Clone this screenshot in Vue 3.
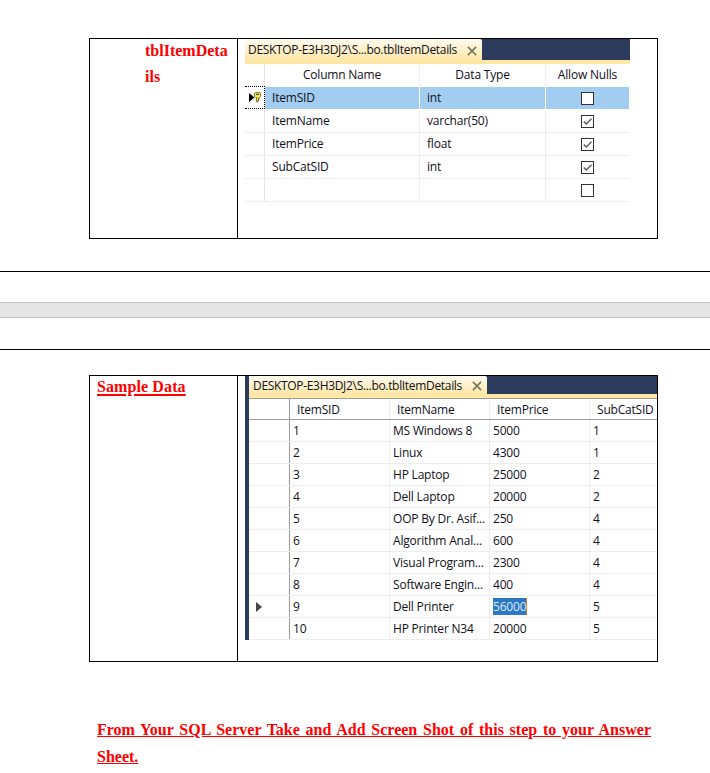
<template>
  <div class="page">
    <!-- design view of the table -->
    <div class="doc-row first">
      <div class="side">
        <h4 class="table-name">tblItemDetails</h4>
      </div>
      <div class="main">
        <div class="design-shot">
          <div class="tab-bar">
            <div class="tab">
              <span class="tab-title">DESKTOP-E3H3DJ2\S...bo.tblItemDetails</span>
              <svg class="tab-close" viewBox="0 0 11 11" aria-hidden="true">
                <path d="M1 1 10 10M10 1 1 10" />
              </svg>
            </div>
          </div>
          <div class="tab-strip"></div>
          <div class="design-row head">
            <div class="handle"></div>
            <div class="cell center">Column Name</div>
            <div class="cell center">Data Type</div>
            <div class="cell center">Allow Nulls</div>
          </div>
          <div
            v-for="(col, i) in columns"
            :key="i"
            class="design-row"
            :class="{ selected: i === 0 }"
          >
            <div class="handle" :class="{ current: i === 0 }">
              <svg v-if="i === 0" class="key" viewBox="0 0 12 11" aria-hidden="true">
                <path class="arrow" d="M0 1 5.500 5.500 0 10Z" />
                <path class="key-body" d="M5.500 1 6.500 .5h4l1 .5v3.500l-1 1H10v1H9v1h1v1H9v1.500H7.500V5.500h-1l-1-1Z" />
                <path class="key-hole" d="M7 1.800h3v1.200H7Z" />
              </svg>
            </div>
            <div class="cell">{{ col.name }}</div>
            <div class="cell">{{ col.type }}</div>
            <div class="cell center check-cell">
              <svg class="check" viewBox="0 0 13 13" aria-hidden="true">
                <rect x="0.500" y="0.500" width="12" height="12" />
                <path v-if="col.nulls" d="M2.800 6.500 5.300 9 10.500 3.800" />
              </svg>
            </div>
          </div>
        </div>
      </div>
    </div>

    <hr class="rule first-rule" />
    <div class="band"></div>
    <hr class="rule second-rule" />

    <!-- sample data -->
    <div class="doc-row second">
      <div class="side side-sample">
        <h4 class="sample-title">Sample Data</h4>
      </div>
      <div class="main">
        <div class="data-shot">
          <div class="tab-bar short">
            <div class="tab">
              <span class="tab-title">DESKTOP-E3H3DJ2\S...bo.tblItemDetails</span>
              <svg class="tab-close" viewBox="0 0 11 11" aria-hidden="true">
                <path d="M1 1 10 10M10 1 1 10" />
              </svg>
            </div>
          </div>
          <div class="tab-strip data-strip"></div>
          <div class="data-row data-head">
            <div class="row-head"></div>
            <div class="data-cell">ItemSID</div>
            <div class="data-cell">ItemName</div>
            <div class="data-cell">ItemPrice</div>
            <div class="data-cell">SubCatSID</div>
          </div>
          <div v-for="item in items" :key="item.id" class="data-row">
            <div class="row-head">
              <svg v-if="item.id === 9" class="pointer" viewBox="0 0 6 10" aria-hidden="true">
                <path d="M0 0 6 5 0 10Z" />
              </svg>
            </div>
            <div class="data-cell">{{ item.id }}</div>
            <div class="data-cell">{{ item.name }}</div>
            <div class="data-cell">
              <span :class="{ editing: item.id === 9 }">{{ item.price }}</span>
            </div>
            <div class="data-cell">{{ item.sub }}</div>
          </div>
        </div>
      </div>
    </div>

    <p class="note">From Your SQL Server Take and Add Screen Shot of this step to your Answer Sheet.</p>
  </div>
</template>

<script setup>
const columns = [
  { name: "ItemSID", type: "int", nulls: false },
  { name: "ItemName", type: "varchar(50)", nulls: true },
  { name: "ItemPrice", type: "float", nulls: true },
  { name: "SubCatSID", type: "int", nulls: true },
  { name: "", type: "", nulls: false },
];

const items = [
  { id: 1, name: "MS Windows 8", price: 5000, sub: 1 },
  { id: 2, name: "Linux", price: 4300, sub: 1 },
  { id: 3, name: "HP Laptop", price: 25000, sub: 2 },
  { id: 4, name: "Dell Laptop", price: 20000, sub: 2 },
  { id: 5, name: "OOP By Dr. Asif...", price: 250, sub: 4 },
  { id: 6, name: "Algorithm Anal...", price: 600, sub: 4 },
  { id: 7, name: "Visual Program...", price: 2300, sub: 4 },
  { id: 8, name: "Software Engin...", price: 400, sub: 4 },
  { id: 9, name: "Dell Printer", price: 56000, sub: 5 },
  { id: 10, name: "HP Printer N34", price: 20000, sub: 5 },
];
</script>

<style>
body {
  background: #fff;
}
</style>

<style scoped>
.page {
  width: 710px;
  height: 773px;
  overflow: hidden;
  padding-top: 38px;
  box-sizing: border-box;
  font-family: "Liberation Serif", serif;
  background: #fff;
}

.doc-row {
  display: grid;
  grid-template-columns: 148px 1fr;
  width: 569px;
  margin-left: 89px;
  box-sizing: border-box;
  border: 1px solid #000;
}
.doc-row.first {
  height: 201px;
}
.doc-row.second {
  height: 287px;
  margin-top: 25px;
}

.side {
  border-right: 1px solid #000;
  padding: 0 8px 0 55px;
  width: 148px;
  box-sizing: border-box;
}
.side-sample {
  padding: 1px 0 0 7px;
}
.table-name {
  margin: -1px 0 0;
  font-size: 16px;
  line-height: 26px;
  color: #f00;
  word-break: break-all;
}
.sample-title {
  margin: 0;
  font-size: 16px;
  line-height: 20px;
  color: #f00;
  text-decoration: underline;
  text-decoration-thickness: 2px;
  text-underline-offset: 2px;
  letter-spacing: 0.1px;
}

.design-shot {
  width: 385px;
  margin-left: 7px;
  font-family: "Open Sans", sans-serif;
  font-size: 12px;
  letter-spacing: -0.2px;
  color: #101020;
}
.tab-bar {
  height: 21px;
  background-color: #2c3b5b;
  background-image: radial-gradient(#3d4f73 0.5px, transparent 0.7px);
  background-size: 4px 4px;
}
.tab {
  display: flex;
  align-items: center;
  width: 237px;
  height: 100%;
  box-sizing: border-box;
  padding-left: 3px;
  background: linear-gradient(#fffbf0, #fde7a8);
  border-top-right-radius: 2px;
}
.tab-title {
  width: 216px;
  white-space: nowrap;
  letter-spacing: -0.32px;
}
.tab-close {
  width: 10px;
  height: 10px;
  margin: 2px 0 0 3px;
}
.tab-close path {
  fill: none;
  stroke: #77735c;
  stroke-width: 1.800;
}
.tab-strip {
  height: 4px;
  background: #ffe8a6;
}

.design-row {
  display: grid;
  grid-template-columns: 20px 155px 126px 83px;
  height: 23px;
  width: 384px;
  box-sizing: border-box;
  border-bottom: 1px solid #ededed;
}
.design-row.head {
  border-bottom: 0;
}
.handle {
  border-right: 1px solid #e4e4e4;
  position: relative;
}
.cell {
  display: flex;
  align-items: center;
  padding: 0 0 2px 7px;
  border-right: 1px solid #ededed;
  white-space: nowrap;
}
.cell:last-child {
  border-right: 0;
}
.cell.center {
  justify-content: center;
  padding-left: 0;
}
.cell.check-cell {
  padding-bottom: 0;
}
.design-row.selected {
  border-bottom-color: #fff;
}
.design-row.selected .cell {
  background: #a3cdf0;
  border-right-color: #fff;
}
.handle.current {
  border-top: 1px dotted #000;
  border-bottom: 1px dotted #000;
  border-right: 1px dotted #000;
  height: 23px;
  box-sizing: border-box;
  margin-top: -1px;
  background: #fff;
}
.key {
  position: absolute;
  left: 4px;
  top: 5px;
  width: 12px;
  height: 11px;
}
.arrow {
  fill: #000;
}
.key-body {
  fill: #f7ee2a;
  stroke: #333;
  stroke-width: 0.600;
}
.key-hole {
  fill: #444;
}
.check {
  width: 13px;
  height: 13px;
}
.check rect {
  fill: #fff;
  stroke: #333;
}
.check path {
  fill: none;
  stroke: #555;
  stroke-width: 1.300;
}

.rule {
  height: 1px;
  margin: 0;
  border: 0;
  background: #000;
}
.first-rule {
  margin-top: 32px;
}
.band {
  height: 16px;
  margin-top: 30px;
  box-sizing: border-box;
  background: #e6e6e6;
  border-top: 1px solid #c4c4c4;
  border-bottom: 1px solid #c4c4c4;
}
.second-rule {
  margin-top: 31px;
}

.data-shot {
  width: 412px;
  margin-left: 7px;
  height: 264px;
  box-sizing: border-box;
  border-left: 4px solid #2c3b5b;
  font-family: "Open Sans", sans-serif;
  font-size: 12px;
  letter-spacing: -0.2px;
  color: #101020;
}
.tab-bar.short {
  height: 18px;
}
.tab-bar.short .tab {
  width: 238px;
  padding-left: 4px;
}
.data-strip {
  border-bottom: 1px solid #9c9c9c;
}
.data-row {
  display: grid;
  grid-template-columns: 41px 100px 100px 100px 67px;
  height: 22px;
  box-sizing: border-box;
  border-bottom: 1px solid #ededed;
}
.data-head {
  height: 21px;
  border-bottom: 1px solid #9c9c9c;
}
.row-head {
  position: relative;
  border-right: 1px solid #9c9c9c;
}
.data-cell {
  display: flex;
  align-items: center;
  padding: 0 0 0 3px;
  border-right: 1px solid #ededed;
  white-space: nowrap;
}
.data-head .data-cell {
  padding-left: 7px;
}
.data-cell:last-child {
  border-right: 0;
}
.pointer {
  position: absolute;
  left: 7px;
  top: 6px;
  width: 6px;
  height: 10px;
}
.pointer path {
  fill: #444;
}
.editing {
  background: #2b78c5;
  color: #dfe9f5;
  border-right: 1px solid #e07020;
}

.note {
  width: 554px;
  margin: 54px 0 0 97px;
  font-size: 16px;
  font-weight: bold;
  line-height: 27px;
  color: #f00;
  text-decoration: underline;
  text-align: justify;
}
</style>
